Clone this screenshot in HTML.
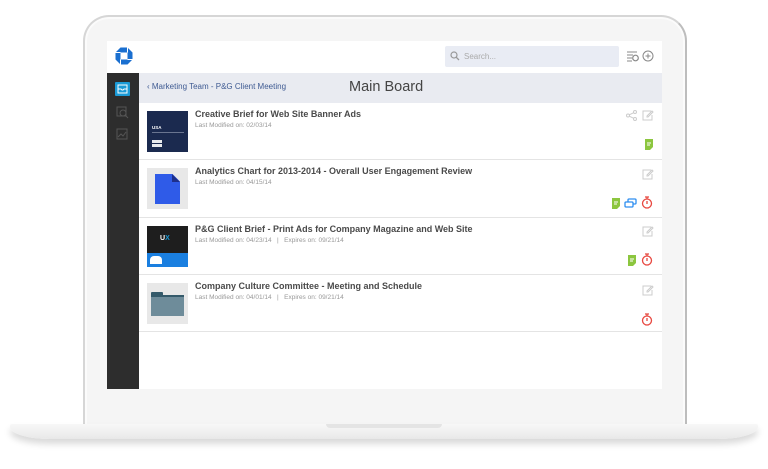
<!DOCTYPE html>
<html><head><meta charset="utf-8"><style>
*{margin:0;padding:0;box-sizing:border-box}
body{width:768px;height:469px;background:#fff;position:relative;overflow:hidden;font-family:"Liberation Sans",sans-serif}
.bezel{position:absolute;left:83px;top:15px;width:604px;height:412px;background:#f5f5f5;border:2px solid #d6d6d6;border-right-color:#bdbdbd;border-bottom:none;border-radius:26px 26px 0 0;box-shadow:inset 0 0 0 2px #fbfbfb}
.base{position:absolute;left:10px;top:424px;width:748px;height:15px;background:linear-gradient(#f8f8f8,#e8e8e8);border-radius:2px 2px 40px 40px/2px 2px 12px 12px;box-shadow:0 5px 7px rgba(0,0,0,.15)}
.notch{position:absolute;left:326px;top:424px;width:116px;height:4px;background:#e4e4e4;border-radius:0 0 6px 6px}
.screen{position:absolute;left:107px;top:41px;width:555px;height:348px;background:#fff;overflow:hidden}
.side{position:absolute;left:0;top:32px;width:32px;height:316px;background:#2d2d2d}
.bar{position:absolute;left:32px;top:32px;width:523px;height:30px;background:#e9ebf1}
.row{position:absolute;left:32px;width:523px;height:57px;border-bottom:1px solid #e4e4e4}
.th{position:absolute;left:8px;top:8px;width:41px;height:41px;background:#e8e8e8}
.t{position:absolute;left:56px;top:6px;font-size:9px;color:#4a4a4a;font-weight:bold;white-space:nowrap}
.m{position:absolute;left:56px;top:19px;font-size:6.5px;color:#999;white-space:nowrap}
.ic{position:absolute}
</style></head><body>
<div class="bezel"></div>
<div class="base"></div><div class="notch"></div>
<div class="screen">
  <svg class="ic" style="left:8px;top:6px" width="18" height="18" viewBox="0 0 18 18"><path d="M5.5 0.5h7l5 5v7l-5 5h-7l-5-5v-7z" fill="#1a6fd0"/><rect x="5.5" y="5.5" width="7" height="7" fill="#fff"/><path d="M12.5 0.5v5M17.5 12.5h-5M5.5 17.5v-5M0.5 5.5h5" stroke="#fff" stroke-width="1"/></svg>
  <div style="position:absolute;left:338px;top:5px;width:174px;height:21px;background:#e9ecf4;border-radius:2px"></div>
  <svg class="ic" style="left:343px;top:10px" width="10" height="10" viewBox="0 0 10 10"><circle cx="4" cy="4" r="3" fill="none" stroke="#999" stroke-width="1.2"/><path d="M6.3 6.3L9 9" stroke="#999" stroke-width="1.3"/></svg>
  <div style="position:absolute;left:357px;top:11px;font-size:8px;color:#aaa">Search...</div>
  <svg class="ic" style="left:520px;top:10px" width="12" height="11" viewBox="0 0 12 11"><path d="M0 1h10M0 4h6M0 7h5M0 10h5" stroke="#888" stroke-width="1"/><circle cx="8.5" cy="7" r="2.8" fill="none" stroke="#888" stroke-width="1.2"/></svg>
  <svg class="ic" style="left:535px;top:9px" width="12" height="12" viewBox="0 0 12 12"><circle cx="6" cy="6" r="5" fill="none" stroke="#888" stroke-width="1"/><path d="M6 3.5v5M3.5 6h5" stroke="#888" stroke-width="1"/></svg>
  <div class="side">
    <div style="position:absolute;left:8px;top:9px;width:15px;height:14px;background:#1b9ad6;border-radius:1px"></div>
    <svg class="ic" style="left:10px;top:11px" width="11" height="10" viewBox="0 0 11 10"><path d="M1 1h9v8H1zM1 5h3l1 1h1l1-1h3" fill="none" stroke="#fff" stroke-width="1"/></svg>
    <svg class="ic" style="left:9px;top:33px" width="13" height="13" viewBox="0 0 13 13"><rect x="1" y="1" width="9" height="9" fill="none" stroke="#555"/><circle cx="7" cy="7" r="3" fill="none" stroke="#555"/><path d="M9 9l3 3" stroke="#555"/></svg>
    <svg class="ic" style="left:9px;top:55px" width="12" height="12" viewBox="0 0 12 12"><rect x="1" y="1" width="10" height="10" fill="none" stroke="#555"/><path d="M2 9l3-3 2 2 3-4" fill="none" stroke="#555"/></svg>
  </div>
  <div class="bar">
    <div style="position:absolute;left:8px;top:9px;font-size:8px;color:#3e5a92">&lsaquo; Marketing Team - P&amp;G Client Meeting</div>
    <div style="position:absolute;left:210px;top:6px;font-size:14.5px;color:#444">Main Board</div>
  </div>
  <div class="row" style="top:62px">
    <div class="th" style="background:#1b2a4f"><div style="position:absolute;left:5px;top:14px;font-size:4.5px;color:#fff;font-weight:bold">USA</div><div style="position:absolute;left:5px;top:21px;width:32px;height:1px;background:#6a7590"></div><div style="position:absolute;left:5px;top:29px;width:10px;height:7px;border-bottom:3px solid #fff;border-top:3px solid #fff;opacity:.9"></div></div>
    <div class="t">Creative Brief for Web Site Banner Ads</div>
    <div class="m">Last Modified on: 02/03/14</div>
    <svg class="ic" style="left:487px;top:7px" width="11" height="11" viewBox="0 0 11 11"><circle cx="9" cy="2" r="1.5" fill="none" stroke="#ccc"/><circle cx="2" cy="5.5" r="1.5" fill="none" stroke="#ccc"/><circle cx="9" cy="9" r="1.5" fill="none" stroke="#ccc"/><path d="M3.3 4.8L7.7 2.7M3.3 6.2L7.7 8.3" stroke="#ccc"/></svg>
    <svg class="ic" style="left:503px;top:6px" width="12" height="12" viewBox="0 0 12 12"><path d="M9 2H1v9h9V6" fill="none" stroke="#ccc"/><path d="M5 7l5-5 1 1-5 5H5z" fill="none" stroke="#ccc"/></svg>
    <svg class="ic" style="left:505px;top:36px" width="10" height="11" viewBox="0 0 10 11"><path d="M1 0h8v8l-3 3H1z" fill="#8cc63f"/><path d="M3 4h4M3 6h3" stroke="#fff"/></svg>
  </div>
  <div class="row" style="top:119px;height:58px">
    <div class="th"><div style="position:absolute;left:8px;top:6px;width:25px;height:30px;background:#2f5be8;clip-path:polygon(0 0,70% 0,100% 25%,100% 100%,0 100%)"></div><div style="position:absolute;left:25px;top:6px;width:8px;height:8px;background:#1e2f8a;clip-path:polygon(0 0,100% 100%,0 100%)"></div></div>
    <div class="t">Analytics Chart for 2013-2014 - Overall User Engagement Review</div>
    <div class="m">Last Modified on: 04/15/14</div>
    <svg class="ic" style="left:503px;top:8px" width="12" height="12" viewBox="0 0 12 12"><path d="M9 2H1v9h9V6" fill="none" stroke="#ccc"/><path d="M5 7l5-5 1 1-5 5H5z" fill="none" stroke="#ccc"/></svg>
    <svg class="ic" style="left:472px;top:38px" width="10" height="11" viewBox="0 0 10 11"><path d="M1 0h8v8l-3 3H1z" fill="#8cc63f"/><path d="M3 4h4M3 6h3" stroke="#fff"/></svg>
    <svg class="ic" style="left:485px;top:38px" width="13" height="11" viewBox="0 0 13 11"><rect x="4" y="1" width="8" height="5" rx="1" fill="none" stroke="#2d8ef0" stroke-width="1.3"/><rect x="1" y="4" width="8" height="5" rx="1" fill="#fff" stroke="#2d8ef0" stroke-width="1.3"/></svg>
    <svg class="ic" style="left:502px;top:36px" width="12" height="13" viewBox="0 0 12 13"><circle cx="6" cy="7.5" r="4.5" fill="none" stroke="#e8473f" stroke-width="1.3"/><path d="M4 1h4M6 1v2M6 5v3" stroke="#e8473f" stroke-width="1.3"/></svg>
  </div>
  <div class="row" style="top:177px">
    <div class="th" style="background:#1e1e1e"><div style="position:absolute;left:13px;top:9px;font-size:7px;color:#fff;font-weight:bold">U<span style="color:#1b9ad6">X</span></div><div style="position:absolute;left:0;top:27px;width:41px;height:14px;background:#1a7fe0"></div><div style="position:absolute;left:3px;top:30px;width:12px;height:8px;background:#fff;border-radius:4px 4px 0 0"></div></div>
    <div class="t">P&amp;G Client Brief - Print Ads for Company Magazine and Web Site</div>
    <div class="m">Last Modified on: 04/23/14 &nbsp;&nbsp;|&nbsp;&nbsp; Expires on: 09/21/14</div>
    <svg class="ic" style="left:503px;top:7px" width="12" height="12" viewBox="0 0 12 12"><path d="M9 2H1v9h9V6" fill="none" stroke="#ccc"/><path d="M5 7l5-5 1 1-5 5H5z" fill="none" stroke="#ccc"/></svg>
    <svg class="ic" style="left:488px;top:37px" width="10" height="11" viewBox="0 0 10 11"><path d="M1 0h8v8l-3 3H1z" fill="#8cc63f"/><path d="M3 4h4M3 6h3" stroke="#fff"/></svg>
    <svg class="ic" style="left:502px;top:35px" width="12" height="13" viewBox="0 0 12 13"><circle cx="6" cy="7.5" r="4.5" fill="none" stroke="#e8473f" stroke-width="1.3"/><path d="M4 1h4M6 1v2M6 5v3" stroke="#e8473f" stroke-width="1.3"/></svg>
  </div>
  <div class="row" style="top:234px">
    <div class="th"><div style="position:absolute;left:4px;top:9px;width:12px;height:4px;background:#345a6a;border-radius:1px 1px 0 0"></div><div style="position:absolute;left:4px;top:12px;width:33px;height:3px;background:#345a6a"></div><div style="position:absolute;left:4px;top:14px;width:33px;height:19px;background:#6e8c9a"></div></div>
    <div class="t">Company Culture Committee - Meeting and Schedule</div>
    <div class="m">Last Modified on: 04/01/14 &nbsp;&nbsp;|&nbsp;&nbsp; Expires on: 09/21/14</div>
    <svg class="ic" style="left:503px;top:9px" width="12" height="12" viewBox="0 0 12 12"><path d="M9 2H1v9h9V6" fill="none" stroke="#ccc"/><path d="M5 7l5-5 1 1-5 5H5z" fill="none" stroke="#ccc"/></svg>
    <svg class="ic" style="left:502px;top:38px" width="12" height="13" viewBox="0 0 12 13"><circle cx="6" cy="7.5" r="4.5" fill="none" stroke="#e8473f" stroke-width="1.3"/><path d="M4 1h4M6 1v2M6 5v3" stroke="#e8473f" stroke-width="1.3"/></svg>
  </div>
</div>
</body></html>
